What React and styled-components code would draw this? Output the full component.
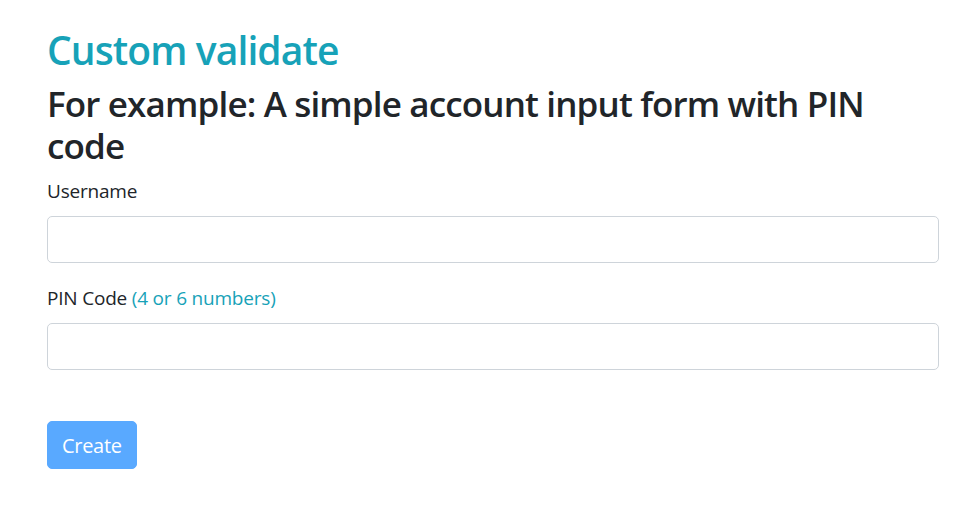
import React from "react";
import styled, { createGlobalStyle } from "styled-components";

const Global = createGlobalStyle`
  html, body { margin: 0; padding: 0; background: #fff; }
  body {
    font-family: "Open Sans", "Noto Sans", sans-serif;
    color: #212529;
  }
  * { box-sizing: border-box; }
`;

const Page = styled.div`
  padding: 26px 39px 40px 47px;
`;

const Title = styled.h2`
  margin: 0 0 9px;
  font-size: 39px;
  font-weight: 600;
  letter-spacing: -0.9px;
  line-height: 48px;
  color: #17a2b8;
`;

const Subtitle = styled.h3`
  margin: 0 0 9px;
  font-size: 35px;
  font-weight: 600;
  letter-spacing: -0.85px;
  line-height: 42px;
  color: #212529;
`;

const Form = styled.form`
  display: flex;
  flex-direction: column;
`;

const Group = styled.div`
  display: flex;
  flex-direction: column;
  margin-bottom: 20px;
`;

const Label = styled.label`
  font-size: 19px;
  line-height: 30px;
  margin-bottom: 10px;
  letter-spacing: -0.2px;
`;

const Hint = styled.span`
  color: #17a2b8;
`;

const Input = styled.input`
  display: block;
  width: 100%;
  height: 47px;
  padding: 7px 15px;
  font-size: 20px;
  font-family: inherit;
  border: 1px solid #ced4da;
  border-radius: 5px;
  background: #fff;
  color: #495057;
  outline: none;
`;

const Button = styled.button`
  align-self: flex-start;
  margin-top: 31px;
  height: 48px;
  padding: 0 14px;
  font-family: inherit;
  font-size: 20px;
  letter-spacing: -0.3px;
  color: #fff;
  background: #59a9ff;
  border: 1px solid #59a9ff;
  border-radius: 5px;
`;

export default function App() {
  return (
    <Page>
      <Global />
      <Title>Custom validate</Title>
      <Subtitle>For example: A simple account input form with PIN code</Subtitle>
      <Form onSubmit={(e) => e.preventDefault()}>
        <Group>
          <Label htmlFor="username">Username</Label>
          <Input id="username" type="text" />
        </Group>
        <Group>
          <Label htmlFor="pin">
            PIN Code <Hint>(4 or 6 numbers)</Hint>
          </Label>
          <Input id="pin" type="password" />
        </Group>
        <Button type="submit">Create</Button>
      </Form>
    </Page>
  );
}
